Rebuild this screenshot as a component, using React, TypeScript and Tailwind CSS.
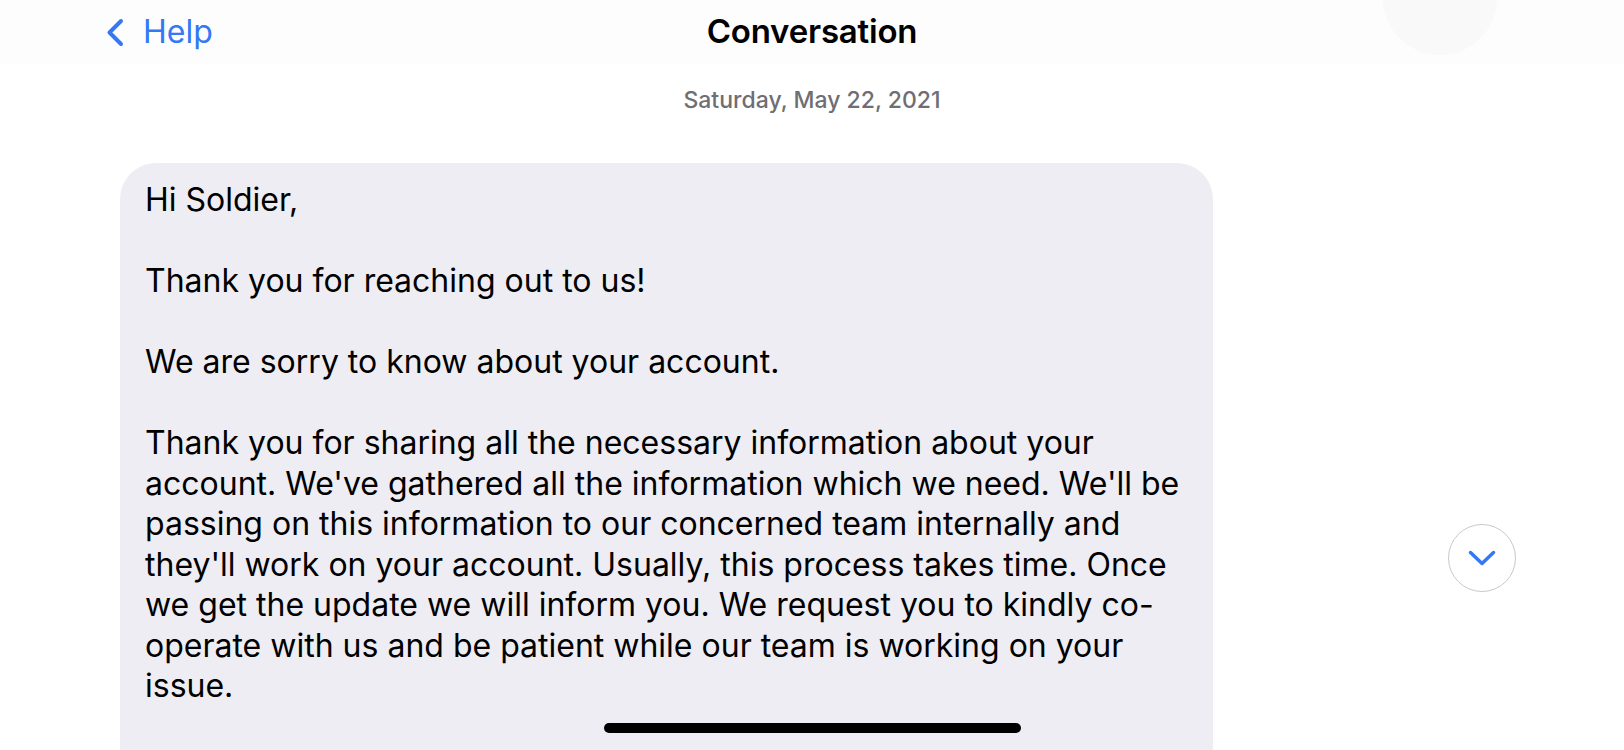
import React from 'react';

const lines = [
  'Hi Soldier,',
  '',
  'Thank you for reaching out to us!',
  '',
  'We are sorry to know about your account.',
  '',
  'Thank you for sharing all the necessary information about your',
  "account. We've gathered all the information which we need. We'll be",
  'passing on this information to our concerned team internally and',
  "they'll work on your account. Usually, this process takes time. Once",
  'we get the update we will inform you. We request you to kindly co-',
  'operate with us and be patient while our team is working on your',
  'issue.',
];

const App = () => {
  return (
    <div className="relative w-[1624px] h-[750px] overflow-hidden bg-white font-['Inter','Liberation_Sans',sans-serif] text-black">
      {/* nav bar */}
      <div className="relative h-16 bg-[#fdfdfd] grid grid-cols-[1fr_auto_1fr] items-center">
        <div className="flex items-center pl-[106px] gap-[19px] text-[#3478f6]">
          <svg width="18" height="29" viewBox="0 0 18 29" fill="none">
            <path d="M15 3 L3.5 14.5 L15 26" stroke="#3478f6" strokeWidth="4" strokeLinecap="round" strokeLinejoin="round" />
          </svg>
          <span className="text-[32px] leading-none">Help</span>
        </div>
        <h1 className="text-[33px] font-semibold leading-none tracking-[-0.2px] -mt-[2px]">Conversation</h1>
        <div />
        <div className="absolute left-[1383px] -top-[59px] w-[114px] h-[114px] rounded-full bg-[#f9f9f9]" />
      </div>

      <div className="flex flex-col items-center pt-[25px]">
        <p className="text-[23px] font-medium text-[#6e6e73] leading-none">Saturday, May 22, 2021</p>
      </div>

      <div className="ml-[120px] mt-[51px] w-[1093px] h-[700px] rounded-[36px] bg-[#eeedf3] pl-[25px] pt-[17px]">
        {lines.map((line, i) => (
          <div key={i} className="text-[32px] leading-[40.5px] h-[40.5px] whitespace-nowrap">
            {line}
          </div>
        ))}
      </div>

      {/* scroll to bottom */}
      <div className="absolute left-[1448px] top-[524px] w-[68px] h-[68px] rounded-full border border-[#c9c9cc] bg-white flex items-center justify-center">
        <svg width="28" height="16" viewBox="0 0 28 16" fill="none">
          <path d="M2.5 2.5 L14 13.5 L25.5 2.5" stroke="#3478f6" strokeWidth="3.5" strokeLinecap="round" strokeLinejoin="round" />
        </svg>
      </div>

      {/* home indicator */}
      <div className="absolute left-[604px] top-[723px] w-[417px] h-[10px] rounded-full bg-black" />
    </div>
  );
};

export default App;
